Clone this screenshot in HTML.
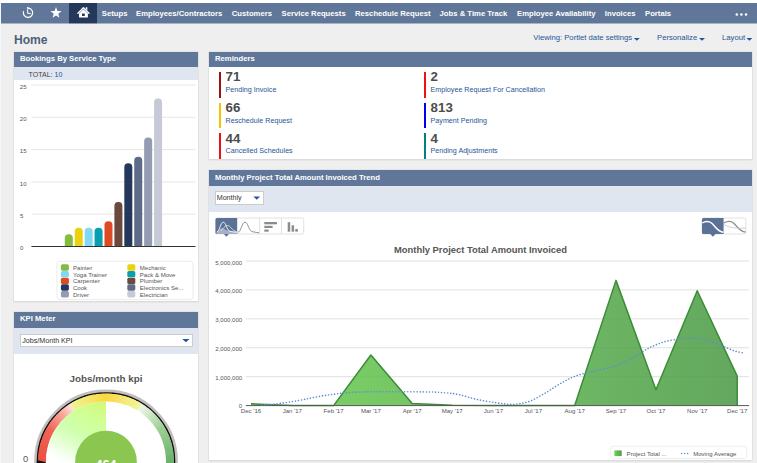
<!DOCTYPE html>
<html lang="en"><head><meta charset="utf-8"><title>Home</title>
<style>
html,body{margin:0;padding:0}
body{width:757px;height:463px;overflow:hidden;position:relative;background:#efefef;font-family:"Liberation Sans",sans-serif;color:#333}
.abs,.nav a,.tl,.portlet,.ph,.sub,.rem,.sel{position:absolute}
#topstrip{left:0;top:0;width:757px;height:3px;background:#fff}
#leftstrip{left:0;top:3px;width:1px;height:460px;background:#f4f7fc}
.nav{position:absolute;left:1px;top:3px;width:756px;height:20px;background:#607799;border-bottom:1px solid #a8b3c4}
.nav a{top:0;height:20.5px;line-height:21.4px;font-size:7.7px;font-weight:bold;color:#fff;white-space:nowrap;text-decoration:none}
.nav .home{left:68px;width:28px;height:20px;background:#24385b;border-bottom:1px solid #8a94a5}
h1{position:absolute;left:14px;top:32.6px;margin:0;font-size:12.1px;line-height:14px;font-weight:bold;color:#4d5f79}
.tl{top:32.7px;font-size:7.7px;line-height:10px;color:#255599;white-space:nowrap}
.portlet{background:#fff;box-shadow:0 0 0 .6px #dcdcdc, 0 1px 1.5px rgba(0,0,0,.12)}
.ph{left:0;top:0;right:0;height:15px;background:#607799;color:#fff;font-weight:bold;font-size:7.7px;line-height:13.4px;padding-left:6px;white-space:nowrap}
.sub{left:0;right:0;background:#e0e6ef}
.sel{background:#fff;border:.6px solid #ccc;box-sizing:border-box;font-size:7.15px;color:#333;white-space:nowrap}
.sel span{position:absolute;left:1.2px;top:0}
.rem{border-left:2px solid #000;height:25.5px;padding-left:4.6px;white-space:nowrap}
.rem b{display:block;font-size:13.3px;line-height:13px;color:#4d4d4d;margin-top:-1.6px}
.rem span{display:block;font-size:7.15px;line-height:9px;color:#255599;margin-top:2.9px}
svg{position:absolute;left:0;top:0;overflow:visible}
svg text{font-family:"Liberation Sans",sans-serif}
</style></head>
<body>
<div class="abs" id="topstrip"></div><div class="abs" id="leftstrip"></div>
<div class="nav"><a class="home" href="#"></a><a style="left:100.8px" href="#">Setups</a><a style="left:135.0px" href="#">Employees/Contractors</a><a style="left:230.8px" href="#">Customers</a><a style="left:280.6px" href="#">Service Requests</a><a style="left:354.0px" href="#">Reschedule Request</a><a style="left:438.6px" href="#">Jobs & Time Track</a><a style="left:516.0px" href="#">Employee Availability</a><a style="left:603.8px" href="#">Invoices</a><a style="left:644.0px" href="#">Portals</a></div>
<svg width="757" height="463" viewBox="0 0 757 463">
<g fill="none" stroke="#fff" stroke-width="1.1" stroke-linecap="round" stroke-linejoin="round">
<path d="M27.6 8.1 A4.65 4.65 0 1 1 23.5 11.6" stroke-width="1.2"/>
<path d="M27.4 7.4 L28.8 8.3 L27.6 9.5" stroke-width="1"/>
<path d="M27.7 10.2 V13.4 H30.4" stroke-width="1"/>
</g>
<polygon fill="#fff" points="56.00,7.10 57.41,11.06 61.61,11.18 58.28,13.74 59.47,17.77 56.00,15.40 52.53,17.77 53.72,13.74 50.39,11.18 54.59,11.06"/>
<g>
<path d="M77.9 13.3 L83.4 7.8 L89 13.3" fill="none" stroke="#fff" stroke-width="1.3" stroke-linecap="round" stroke-linejoin="round"/>
<path d="M85.7 7.2 h1.6 v3.2 l-1.6 -1.6z" fill="#fff"/>
<path d="M79 13.6 L83.4 9.3 L87.9 13.6 V17 a.5 .5 0 0 1 -.5 .5 H79.5 a.5 .5 0 0 1 -.5 -.5z M82 13.5 v2.5 h2.8 v-2.5z" fill="#fff" fill-rule="evenodd"/>
</g>
<g fill="#255599">
<path d="M633.8 38 h6 l-3 2.7z"/><path d="M699 38 h6 l-3 2.7z"/><path d="M746.4 38 h6 l-3 2.7z"/>

</g>
<g fill="#fff"><circle cx="736.8" cy="14.6" r="1.25"/><circle cx="741.4" cy="14.6" r="1.25"/><circle cx="746" cy="14.6" r="1.25"/></g>
</svg>
<h1>Home</h1>
<div class="tl" style="left:533.2px">Viewing: Portlet date settings</div>
<div class="tl" style="left:657px">Personalize</div>
<div class="tl" style="left:722px">Layout</div>

<div class="portlet" style="left:14px;top:52px;width:184px;height:249px">
 <div class="ph">Bookings By Service Type</div>
 <div class="sub" style="top:15px;height:13px"><span class="abs" style="left:14.5px;top:2.9px;font-size:7.05px;line-height:9px;color:#444">TOTAL: <span style="color:#255599">10</span></span></div>
</div>
<svg width="757" height="463" viewBox="0 0 757 463"><text x="23.4" y="250.20" text-anchor="end" font-size="6.05" fill="#555">0</text><line x1="31.4" x2="195.5" y1="214.20" y2="214.20" stroke="#e6e6e6" stroke-width="1"/><text x="23.4" y="217.90" text-anchor="end" font-size="6.05" fill="#555">5</text><line x1="31.4" x2="195.5" y1="181.90" y2="181.90" stroke="#e6e6e6" stroke-width="1"/><text x="26.5" y="185.60" text-anchor="end" font-size="6.05" fill="#555">10</text><line x1="31.4" x2="195.5" y1="149.60" y2="149.60" stroke="#e6e6e6" stroke-width="1"/><text x="26.5" y="153.30" text-anchor="end" font-size="6.05" fill="#555">15</text><line x1="31.4" x2="195.5" y1="117.30" y2="117.30" stroke="#e6e6e6" stroke-width="1"/><text x="26.5" y="121.00" text-anchor="end" font-size="6.05" fill="#555">20</text><line x1="31.4" x2="195.5" y1="85.00" y2="85.00" stroke="#e6e6e6" stroke-width="1"/><text x="26.5" y="88.70" text-anchor="end" font-size="6.05" fill="#555">25</text><path d="M64.80 245.5 V238.08 a3.8 3.8 0 0 1 3.8 -3.8 h0.40 a3.8 3.8 0 0 1 3.8 3.8 V245.5 a1 1 0 0 1 -1 1 h-6 a1 1 0 0 1 -1 -1z" fill="#84bc41"/><path d="M74.72 245.5 V231.62 a3.8 3.8 0 0 1 3.8 -3.8 h0.40 a3.8 3.8 0 0 1 3.8 3.8 V245.5 a1 1 0 0 1 -1 1 h-6 a1 1 0 0 1 -1 -1z" fill="#edd010"/><path d="M84.64 245.5 V231.62 a3.8 3.8 0 0 1 3.8 -3.8 h0.40 a3.8 3.8 0 0 1 3.8 3.8 V245.5 a1 1 0 0 1 -1 1 h-6 a1 1 0 0 1 -1 -1z" fill="#80d8f5"/><path d="M94.56 245.5 V231.62 a3.8 3.8 0 0 1 3.8 -3.8 h0.40 a3.8 3.8 0 0 1 3.8 3.8 V245.5 a1 1 0 0 1 -1 1 h-6 a1 1 0 0 1 -1 -1z" fill="#0a9fb0"/><path d="M104.48 245.5 V225.16 a3.8 3.8 0 0 1 3.8 -3.8 h0.40 a3.8 3.8 0 0 1 3.8 3.8 V245.5 a1 1 0 0 1 -1 1 h-6 a1 1 0 0 1 -1 -1z" fill="#dc4b23"/><path d="M114.40 245.5 V205.78 a3.8 3.8 0 0 1 3.8 -3.8 h0.40 a3.8 3.8 0 0 1 3.8 3.8 V245.5 a1 1 0 0 1 -1 1 h-6 a1 1 0 0 1 -1 -1z" fill="#6b493c"/><path d="M124.32 245.5 V167.02 a3.8 3.8 0 0 1 3.8 -3.8 h0.40 a3.8 3.8 0 0 1 3.8 3.8 V245.5 a1 1 0 0 1 -1 1 h-6 a1 1 0 0 1 -1 -1z" fill="#24385b"/><path d="M134.24 245.5 V160.56 a3.8 3.8 0 0 1 3.8 -3.8 h0.40 a3.8 3.8 0 0 1 3.8 3.8 V245.5 a1 1 0 0 1 -1 1 h-6 a1 1 0 0 1 -1 -1z" fill="#5c6b88"/><path d="M144.16 245.5 V141.18 a3.8 3.8 0 0 1 3.8 -3.8 h0.40 a3.8 3.8 0 0 1 3.8 3.8 V245.5 a1 1 0 0 1 -1 1 h-6 a1 1 0 0 1 -1 -1z" fill="#939cb3"/><path d="M154.08 245.5 V102.42 a3.8 3.8 0 0 1 3.8 -3.8 h0.40 a3.8 3.8 0 0 1 3.8 3.8 V245.5 a1 1 0 0 1 -1 1 h-6 a1 1 0 0 1 -1 -1z" fill="#c6cad6"/><line x1="31.4" x2="195.5" y1="246.5" y2="246.5" stroke="#333" stroke-width="1"/><rect x="57" y="261.3" width="136" height="38.3" rx="3" fill="#fff" stroke="#e3e3e3" stroke-width=".7"/><rect x="60.9" y="264.30" width="8" height="6.4" rx="1.6" fill="#84bc41"/><text x="73" y="270.10" font-size="6.05" fill="#555">Painter</text><rect x="127.3" y="264.30" width="8" height="6.4" rx="1.6" fill="#edd010"/><text x="139.8" y="270.10" font-size="6.05" fill="#555">Mechanic</text><rect x="60.9" y="270.97" width="8" height="6.4" rx="1.6" fill="#80d8f5"/><text x="73" y="276.77" font-size="6.05" fill="#555">Yoga Trainer</text><rect x="127.3" y="270.97" width="8" height="6.4" rx="1.6" fill="#0a9fb0"/><text x="139.8" y="276.77" font-size="6.05" fill="#555">Pack & Move</text><rect x="60.9" y="277.64" width="8" height="6.4" rx="1.6" fill="#dc4b23"/><text x="73" y="283.44" font-size="6.05" fill="#555">Carpenter</text><rect x="127.3" y="277.64" width="8" height="6.4" rx="1.6" fill="#6b493c"/><text x="139.8" y="283.44" font-size="6.05" fill="#555">Plumber</text><rect x="60.9" y="284.31" width="8" height="6.4" rx="1.6" fill="#24385b"/><text x="73" y="290.11" font-size="6.05" fill="#555">Cook</text><rect x="127.3" y="284.31" width="8" height="6.4" rx="1.6" fill="#5c6b88"/><text x="139.8" y="290.11" font-size="6.05" fill="#555">Electronics Se...</text><rect x="60.9" y="290.98" width="8" height="6.4" rx="1.6" fill="#939cb3"/><text x="73" y="296.78" font-size="6.05" fill="#555">Driver</text><rect x="127.3" y="290.98" width="8" height="6.4" rx="1.6" fill="#c6cad6"/><text x="139.8" y="296.78" font-size="6.05" fill="#555">Electrician</text></svg>

<div class="portlet" style="left:14px;top:312px;width:184px;height:160px">
 <div class="ph" style="height:16px;line-height:14.4px">KPI Meter</div>
 <div class="sub" style="top:16px;height:26px"><div class="sel" style="left:6px;top:6px;width:172.5px;height:13.4px;line-height:12.4px"><span>Jobs/Month KPI</span></div></div>
</div>
<svg width="757" height="463" viewBox="0 0 757 463"><defs><linearGradient id="sg" gradientUnits="userSpaceOnUse" x1="62" y1="472" x2="100" y2="402"><stop offset="0.12" stop-color="#fff"/><stop offset="0.5" stop-color="#d0ffb2"/><stop offset="0.8" stop-color="#d0ff92"/><stop offset="1" stop-color="#d4f87c"/></linearGradient><clipPath id="kc"><rect x="14" y="354" width="184" height="109"/></clipPath></defs><g clip-path="url(#kc)"><circle cx="106" cy="461.5" r="70.3" fill="none" stroke="#c2bebe" stroke-width="3.2"/><circle cx="106" cy="461.5" r="68.4" fill="#fff" stroke="#111" stroke-width="1.8"/><path d="M38.37 468.61 A68 68 0 0 1 38.11 465.33 L46.10 464.88 A60 60 0 0 0 46.33 467.77z" fill="#ea4b3b"/><path d="M38.15 466.09 A68 68 0 0 1 38.01 462.80 L46.01 462.64 A60 60 0 0 0 46.14 465.55z" fill="#eb4c3d"/><path d="M38.03 463.56 A68 68 0 0 1 38.01 460.27 L46.01 460.41 A60 60 0 0 0 46.03 463.31z" fill="#eb4e3e"/><path d="M38.00 461.03 A68 68 0 0 1 38.10 457.74 L46.09 458.18 A60 60 0 0 0 46.00 461.08z" fill="#eb5040"/><path d="M38.07 458.49 A68 68 0 0 1 38.29 455.21 L46.26 455.95 A60 60 0 0 0 46.06 458.85z" fill="#ec5142"/><path d="M38.23 455.97 A68 68 0 0 1 38.57 452.69 L46.51 453.73 A60 60 0 0 0 46.20 456.62z" fill="#ec5343"/><path d="M38.48 453.45 A68 68 0 0 1 38.95 450.19 L46.84 451.52 A60 60 0 0 0 46.42 454.40z" fill="#ec5445"/><path d="M38.82 450.94 A68 68 0 0 1 39.41 447.70 L47.25 449.33 A60 60 0 0 0 46.73 452.18z" fill="#ed5647"/><path d="M39.26 448.45 A68 68 0 0 1 39.97 445.23 L47.74 447.15 A60 60 0 0 0 47.12 449.98z" fill="#ed5748"/><path d="M39.80 445.97 A68 68 0 0 1 40.63 442.79 L48.32 444.99 A60 60 0 0 0 47.59 447.80z" fill="#ed594a"/><path d="M40.42 443.52 A68 68 0 0 1 41.37 440.37 L48.97 442.85 A60 60 0 0 0 48.14 445.63z" fill="#ee5b4c"/><path d="M41.14 441.09 A68 68 0 0 1 42.20 437.98 L49.70 440.74 A60 60 0 0 0 48.77 443.49z" fill="#ee5c4e"/><path d="M41.94 438.69 A68 68 0 0 1 43.12 435.62 L50.52 438.66 A60 60 0 0 0 49.48 441.37z" fill="#ef5e4f"/><path d="M42.83 436.32 A68 68 0 0 1 44.13 433.29 L51.41 436.61 A60 60 0 0 0 50.26 439.28z" fill="#ef5f51"/><path d="M43.81 433.99 A68 68 0 0 1 45.22 431.01 L52.37 434.60 A60 60 0 0 0 51.13 437.22z" fill="#ef6153"/><path d="M44.88 431.69 A68 68 0 0 1 46.40 428.77 L53.41 432.62 A60 60 0 0 0 52.07 435.20z" fill="#f06254"/><path d="M46.03 429.44 A68 68 0 0 1 47.66 426.57 L54.52 430.68 A60 60 0 0 0 53.09 433.21z" fill="#f06456"/><path d="M47.27 427.23 A68 68 0 0 1 49.00 424.42 L55.70 428.79 A60 60 0 0 0 54.18 431.26z" fill="#f16c5e"/><path d="M48.59 425.06 A68 68 0 0 1 50.42 422.33 L56.96 426.94 A60 60 0 0 0 55.34 429.35z" fill="#f27466"/><path d="M49.98 422.95 A68 68 0 0 1 51.91 420.29 L58.28 425.14 A60 60 0 0 0 56.57 427.49z" fill="#f37b6f"/><path d="M51.46 420.89 A68 68 0 0 1 53.48 418.30 L59.66 423.38 A60 60 0 0 0 57.87 425.67z" fill="#f48377"/><path d="M53.01 418.89 A68 68 0 0 1 55.13 416.38 L61.11 421.69 A60 60 0 0 0 59.24 423.90z" fill="#f68b7f"/><path d="M54.63 416.95 A68 68 0 0 1 56.84 414.51 L62.63 420.04 A60 60 0 0 0 60.67 422.19z" fill="#f79387"/><path d="M56.32 415.07 A68 68 0 0 1 58.63 412.72 L64.20 418.46 A60 60 0 0 0 62.17 420.53z" fill="#f89a90"/><path d="M58.08 413.25 A68 68 0 0 1 60.48 410.99 L65.83 416.93 A60 60 0 0 0 63.72 418.93z" fill="#f9a298"/><path d="M59.91 411.50 A68 68 0 0 1 62.39 409.33 L67.52 415.47 A60 60 0 0 0 65.34 417.38z" fill="#faaaa0"/><path d="M61.81 409.82 A68 68 0 0 1 64.36 407.74 L69.26 414.07 A60 60 0 0 0 67.01 415.90z" fill="#fbb6ae"/><path d="M63.76 408.21 A68 68 0 0 1 66.39 406.23 L71.05 412.73 A60 60 0 0 0 68.73 414.48z" fill="#fcc3bc"/><path d="M65.77 406.67 A68 68 0 0 1 68.47 404.79 L72.89 411.46 A60 60 0 0 0 70.51 413.12z" fill="#fdcfc9"/><path d="M67.84 405.21 A68 68 0 0 1 69.97 403.83 L74.20 410.62 A60 60 0 0 0 72.33 411.84z" fill="#fedcd7"/><path d="M69.97 403.83 A68 68 0 0 1 72.80 402.16 L76.70 409.14 A60 60 0 0 0 74.20 410.62z" fill="#eef593"/><path d="M72.14 402.53 A68 68 0 0 1 75.03 400.96 L78.67 408.08 A60 60 0 0 0 76.12 409.47z" fill="#eff38e"/><path d="M74.36 401.31 A68 68 0 0 1 77.30 399.85 L80.68 407.10 A60 60 0 0 0 78.08 408.39z" fill="#f0f188"/><path d="M76.62 400.18 A68 68 0 0 1 79.62 398.83 L82.72 406.20 A60 60 0 0 0 80.07 407.39z" fill="#f1ef82"/><path d="M78.92 399.12 A68 68 0 0 1 81.97 397.89 L84.80 405.37 A60 60 0 0 0 82.11 406.46z" fill="#f2ec7d"/><path d="M81.26 398.16 A68 68 0 0 1 84.36 397.04 L86.90 404.62 A60 60 0 0 0 84.17 405.61z" fill="#f3ea77"/><path d="M83.64 397.28 A68 68 0 0 1 86.77 396.28 L89.03 403.95 A60 60 0 0 0 86.27 404.84z" fill="#f4e872"/><path d="M86.04 396.49 A68 68 0 0 1 89.21 395.60 L91.19 403.36 A60 60 0 0 0 88.39 404.14z" fill="#f5e66c"/><path d="M88.48 395.80 A68 68 0 0 1 91.68 395.03 L93.36 402.85 A60 60 0 0 0 90.54 403.53z" fill="#f6e466"/><path d="M90.93 395.19 A68 68 0 0 1 94.16 394.54 L95.55 402.42 A60 60 0 0 0 92.71 402.99z" fill="#f7e261"/><path d="M93.41 394.67 A68 68 0 0 1 96.66 394.14 L97.76 402.07 A60 60 0 0 0 94.89 402.54z" fill="#f8e05b"/><path d="M95.91 394.25 A68 68 0 0 1 99.18 393.84 L99.98 401.80 A60 60 0 0 0 97.10 402.16z" fill="#f9dd56"/><path d="M98.42 393.92 A68 68 0 0 1 101.70 393.64 L102.20 401.62 A60 60 0 0 0 99.31 401.87z" fill="#fadb50"/><path d="M100.94 393.69 A68 68 0 0 1 104.23 393.52 L104.44 401.52 A60 60 0 0 0 101.54 401.67z" fill="#fbd94a"/><path d="M103.47 393.55 A68 68 0 0 1 106.76 393.50 L106.67 401.50 A60 60 0 0 0 103.77 401.54z" fill="#fcd745"/><path d="M106.00 393.50 A68 68 0 0 1 109.29 393.58 L108.90 401.57 A60 60 0 0 0 106.00 401.50z" fill="#fcd745"/><path d="M108.53 393.55 A68 68 0 0 1 111.82 393.75 L111.13 401.72 A60 60 0 0 0 108.23 401.54z" fill="#fbd94b"/><path d="M111.06 393.69 A68 68 0 0 1 114.33 394.01 L113.35 401.95 A60 60 0 0 0 110.46 401.67z" fill="#fadc52"/><path d="M113.58 393.92 A68 68 0 0 1 116.84 394.37 L115.57 402.27 A60 60 0 0 0 112.69 401.87z" fill="#f9de58"/><path d="M116.09 394.25 A68 68 0 0 1 119.33 394.82 L117.76 402.66 A60 60 0 0 0 114.90 402.16z" fill="#f8e05e"/><path d="M118.59 394.67 A68 68 0 0 1 121.81 395.36 L119.95 403.14 A60 60 0 0 0 117.11 402.54z" fill="#f8e264"/><path d="M121.07 395.19 A68 68 0 0 1 124.26 396.00 L122.11 403.70 A60 60 0 0 0 119.29 402.99z" fill="#f7e56b"/><path d="M123.52 395.80 A68 68 0 0 1 126.68 396.72 L124.25 404.34 A60 60 0 0 0 121.46 403.53z" fill="#f6e771"/><path d="M125.96 396.49 A68 68 0 0 1 129.08 397.54 L126.36 405.06 A60 60 0 0 0 123.61 404.14z" fill="#f5e977"/><path d="M128.36 397.28 A68 68 0 0 1 131.44 398.44 L128.45 405.86 A60 60 0 0 0 125.73 404.84z" fill="#f4ec7e"/><path d="M130.74 398.16 A68 68 0 0 1 133.77 399.43 L130.51 406.73 A60 60 0 0 0 127.83 405.61z" fill="#f4ee84"/><path d="M133.08 399.12 A68 68 0 0 1 136.06 400.51 L132.53 407.68 A60 60 0 0 0 129.89 406.46z" fill="#f3f08a"/><path d="M135.38 400.18 A68 68 0 0 1 138.31 401.67 L134.51 408.71 A60 60 0 0 0 131.93 407.39z" fill="#f2f290"/><path d="M137.64 401.31 A68 68 0 0 1 140.52 402.91 L136.46 409.81 A60 60 0 0 0 133.92 408.39z" fill="#f1f597"/><path d="M139.86 402.53 A68 68 0 0 1 142.03 403.83 L137.80 410.62 A60 60 0 0 0 135.88 409.47z" fill="#f0f79d"/><path d="M142.03 403.83 A68 68 0 0 1 144.78 405.64 L140.22 412.22 A60 60 0 0 0 137.80 410.62z" fill="#edf6e8"/><path d="M144.16 405.21 A68 68 0 0 1 146.83 407.13 L142.03 413.52 A60 60 0 0 0 139.67 411.84z" fill="#e6f3e1"/><path d="M146.23 406.67 A68 68 0 0 1 148.83 408.68 L143.79 414.90 A60 60 0 0 0 141.49 413.12z" fill="#dff0da"/><path d="M148.24 408.21 A68 68 0 0 1 150.77 410.31 L145.50 416.34 A60 60 0 0 0 143.27 414.48z" fill="#d9ecd3"/><path d="M150.19 409.82 A68 68 0 0 1 152.64 412.02 L147.15 417.84 A60 60 0 0 0 144.99 415.90z" fill="#d2e9cc"/><path d="M152.09 411.50 A68 68 0 0 1 154.45 413.79 L148.75 419.40 A60 60 0 0 0 146.66 417.38z" fill="#cbe6c5"/><path d="M153.92 413.25 A68 68 0 0 1 156.19 415.62 L150.29 421.02 A60 60 0 0 0 148.28 418.93z" fill="#c5e2bd"/><path d="M155.68 415.07 A68 68 0 0 1 157.87 417.52 L151.76 422.70 A60 60 0 0 0 149.83 420.53z" fill="#bedfb6"/><path d="M157.37 416.95 A68 68 0 0 1 159.47 419.49 L153.18 424.43 A60 60 0 0 0 151.33 422.19z" fill="#b7dcaf"/><path d="M158.99 418.89 A68 68 0 0 1 160.99 421.51 L154.52 426.21 A60 60 0 0 0 152.76 423.90z" fill="#b1d8a8"/><path d="M160.54 420.89 A68 68 0 0 1 162.45 423.58 L155.80 428.04 A60 60 0 0 0 154.13 425.67z" fill="#aad5a1"/><path d="M162.02 422.95 A68 68 0 0 1 163.82 425.71 L157.02 429.92 A60 60 0 0 0 155.43 427.49z" fill="#a3d29a"/><path d="M163.41 425.06 A68 68 0 0 1 165.11 427.88 L158.16 431.84 A60 60 0 0 0 156.66 429.35z" fill="#9ecf95"/><path d="M164.73 427.23 A68 68 0 0 1 166.32 430.11 L159.22 433.80 A60 60 0 0 0 157.82 431.26z" fill="#9bcd92"/><path d="M165.97 429.44 A68 68 0 0 1 167.45 432.38 L160.22 435.80 A60 60 0 0 0 158.91 433.21z" fill="#97cb8f"/><path d="M167.12 431.69 A68 68 0 0 1 168.49 434.68 L161.14 437.84 A60 60 0 0 0 159.93 435.20z" fill="#94c98c"/><path d="M168.19 433.99 A68 68 0 0 1 169.44 437.03 L161.98 439.91 A60 60 0 0 0 160.87 437.22z" fill="#90c78a"/><path d="M169.17 436.32 A68 68 0 0 1 170.31 439.41 L162.74 442.01 A60 60 0 0 0 161.74 439.28z" fill="#8cc587"/><path d="M170.06 438.69 A68 68 0 0 1 171.09 441.82 L163.43 444.13 A60 60 0 0 0 162.52 441.37z" fill="#89c384"/><path d="M170.86 441.09 A68 68 0 0 1 171.78 444.25 L164.04 446.28 A60 60 0 0 0 163.23 443.49z" fill="#85c181"/><path d="M171.58 443.52 A68 68 0 0 1 172.37 446.71 L164.56 448.45 A60 60 0 0 0 163.86 445.63z" fill="#82bf7e"/><path d="M172.20 445.97 A68 68 0 0 1 172.88 449.19 L165.01 450.64 A60 60 0 0 0 164.41 447.80z" fill="#7ebd7c"/><path d="M172.74 448.45 A68 68 0 0 1 173.29 451.69 L165.37 452.85 A60 60 0 0 0 164.88 449.98z" fill="#7bbb79"/><path d="M173.18 450.94 A68 68 0 0 1 173.61 454.20 L165.65 455.06 A60 60 0 0 0 165.27 452.18z" fill="#77b976"/><path d="M173.52 453.45 A68 68 0 0 1 173.83 456.72 L165.85 457.29 A60 60 0 0 0 165.58 454.40z" fill="#74b773"/><path d="M173.77 455.97 A68 68 0 0 1 173.96 459.25 L165.97 459.52 A60 60 0 0 0 165.80 456.62z" fill="#70b570"/><path d="M173.93 458.49 A68 68 0 0 1 174.00 461.78 L166.00 461.75 A60 60 0 0 0 165.94 458.85z" fill="#6cb36e"/><path d="M174.00 461.03 A68 68 0 0 1 173.94 464.32 L165.95 463.98 A60 60 0 0 0 166.00 461.08z" fill="#69b16b"/><path d="M173.97 463.56 A68 68 0 0 1 173.79 466.84 L165.81 466.21 A60 60 0 0 0 165.97 463.31z" fill="#65af68"/><path d="M173.85 466.09 A68 68 0 0 1 173.63 468.61 L165.67 467.77 A60 60 0 0 0 165.86 465.55z" fill="#62ad65"/><path d="M106 464.5 L46.00 464.5 L46.00 461.50 A60 60 0 0 1 106.00 401.50z" fill="url(#sg)"/><circle cx="106" cy="461.5" r="30.8" fill="#8ac650"/><path d="M36.5 463 L38 460.3 L45.6 462.2 L45.4 463z" fill="#111"/><text x="106" y="468.6" text-anchor="middle" font-size="12.6" font-weight="bold" fill="#fff">464</text></g><text x="106" y="381.8" text-anchor="middle" font-size="9.9" font-weight="bold" fill="#555">Jobs/month kpi</text><text x="23" y="462" font-size="9.4" fill="#555">0</text></svg>

<div class="portlet" style="left:209px;top:52px;width:543.3px;height:107.2px">
 <div class="ph">Reminders</div>
 <div class="rem" style="left:10px;top:20.0px;border-left-color:#a01010"><b>71</b><span>Pending Invoice</span></div><div class="rem" style="left:10px;top:50.6px;border-left-color:#f8c200"><b>66</b><span>Reschedule Request</span></div><div class="rem" style="left:10px;top:81.1px;border-left-color:#f01010"><b>44</b><span>Cancelled Schedules</span></div><div class="rem" style="left:215px;top:20.0px;border-left-color:#f01010"><b>2</b><span>Employee Request For Cancellation</span></div><div class="rem" style="left:215px;top:50.6px;border-left-color:#0000ee"><b>813</b><span>Payment Pending</span></div><div class="rem" style="left:215px;top:81.1px;border-left-color:#008080"><b>4</b><span>Pending Adjustments</span></div>
</div>

<div class="portlet" style="left:209px;top:170px;width:543.3px;height:290px">
 <div class="ph" style="height:16px;line-height:15.6px">Monthly Project Total Amount Invoiced Trend</div>
 <div class="sub" style="top:16px;height:26px"><div class="sel" style="left:5.5px;top:5px;width:49px;height:13.6px;line-height:12.6px"><span>Monthly</span></div></div>
</div>
<svg width="757" height="463" viewBox="0 0 757 463"><defs><linearGradient id="ag" gradientUnits="userSpaceOnUse" x1="251" y1="0" x2="738" y2="0"><stop offset="0" stop-color="#67cd48"/><stop offset="0.5" stop-color="#59b34c"/><stop offset="1" stop-color="#489842"/></linearGradient></defs><text x="242.2" y="407.90" text-anchor="end" font-size="6.05" fill="#555">0</text><line x1="245.8" x2="749" y1="376.68" y2="376.68" stroke="#e0e0e0" stroke-width="1"/><text x="242.2" y="380.18" text-anchor="end" font-size="6.05" fill="#555">1,000,000</text><line x1="245.8" x2="749" y1="347.76" y2="347.76" stroke="#e0e0e0" stroke-width="1"/><text x="242.2" y="351.26" text-anchor="end" font-size="6.05" fill="#555">2,000,000</text><line x1="245.8" x2="749" y1="318.84" y2="318.84" stroke="#e0e0e0" stroke-width="1"/><text x="242.2" y="322.34" text-anchor="end" font-size="6.05" fill="#555">3,000,000</text><line x1="245.8" x2="749" y1="289.92" y2="289.92" stroke="#e0e0e0" stroke-width="1"/><text x="242.2" y="293.42" text-anchor="end" font-size="6.05" fill="#555">4,000,000</text><line x1="245.8" x2="749" y1="261.00" y2="261.00" stroke="#e0e0e0" stroke-width="1"/><text x="242.2" y="264.50" text-anchor="end" font-size="6.05" fill="#555">5,000,000</text><polygon points="251.00,405.6 251.00,403.86 292.29,405.60 333.59,405.60 370.88,354.99 412.18,403.58 452.14,405.31 493.43,405.60 533.40,405.60 574.69,405.60 615.98,280.38 655.94,389.69 697.24,290.79 737.20,376.10 737.20,405.6" fill="url(#ag)" fill-opacity=".85"/><polyline points="251.00,403.86 292.29,405.60 333.59,405.60 370.88,354.99 412.18,403.58 452.14,405.31 493.43,405.60 533.40,405.60 574.69,405.60 615.98,280.38 655.94,389.69 697.24,290.79 737.20,376.10 737.20,405.6" fill="none" stroke="#3c8c37" stroke-width="1.5" stroke-linejoin="round"/><line x1="245.8" x2="749" y1="405.6" y2="405.6" stroke="#555" stroke-width="1"/><text x="251.00" y="412.7" text-anchor="middle" font-size="6.05" fill="#555">Dec '16</text><text x="292.29" y="412.7" text-anchor="middle" font-size="6.05" fill="#555">Jan '17</text><text x="333.59" y="412.7" text-anchor="middle" font-size="6.05" fill="#555">Feb '17</text><text x="370.88" y="412.7" text-anchor="middle" font-size="6.05" fill="#555">Mar '17</text><text x="412.18" y="412.7" text-anchor="middle" font-size="6.05" fill="#555">Apr '17</text><text x="452.14" y="412.7" text-anchor="middle" font-size="6.05" fill="#555">May '17</text><text x="493.43" y="412.7" text-anchor="middle" font-size="6.05" fill="#555">Jun '17</text><text x="533.40" y="412.7" text-anchor="middle" font-size="6.05" fill="#555">Jul '17</text><text x="574.69" y="412.7" text-anchor="middle" font-size="6.05" fill="#555">Aug '17</text><text x="615.98" y="412.7" text-anchor="middle" font-size="6.05" fill="#555">Sep '17</text><text x="655.94" y="412.7" text-anchor="middle" font-size="6.05" fill="#555">Oct '17</text><text x="697.24" y="412.7" text-anchor="middle" font-size="6.05" fill="#555">Nov '17</text><text x="737.20" y="412.7" text-anchor="middle" font-size="6.05" fill="#555">Dec '17</text><path d="M262 405 C264.17 404.83 269.00 404.73 275 404 C281.00 403.27 291.17 401.77 298 400.6 C304.83 399.43 310.03 398.07 316 397 C321.97 395.93 327.87 394.97 333.8 394.2 C339.73 393.43 345.40 392.80 351.6 392.4 C357.80 392.00 362.93 391.90 371 391.8 C379.07 391.70 390.17 391.77 400 391.8 C409.83 391.83 422.50 391.83 430 392 C437.50 392.17 440.23 392.38 445 392.8 C449.77 393.22 453.30 393.40 458.6 394.5 C463.90 395.60 470.47 398.02 476.8 399.4 C483.13 400.78 490.65 401.98 496.6 402.8 C502.55 403.62 507.22 404.48 512.5 404.3 C517.78 404.12 523.02 403.47 528.3 401.7 C533.58 399.93 538.92 396.68 544.2 393.7 C549.48 390.72 554.72 386.77 560 383.8 C565.28 380.83 569.95 378.08 575.9 375.9 C581.85 373.72 589.10 372.35 595.7 370.7 C602.30 369.05 609.55 367.98 615.5 366 C621.45 364.02 626.10 361.65 631.4 358.8 C636.70 355.95 642.03 351.67 647.3 348.9 C652.57 346.13 657.72 343.85 663 342.2 C668.28 340.55 674.37 339.67 679 339 C683.63 338.33 686.18 338.00 690.8 338.2 C695.42 338.40 701.40 338.87 706.7 340.2 C712.00 341.53 717.97 344.42 722.6 346.2 C727.23 347.98 731.07 349.78 734.5 350.9 C737.93 352.02 741.75 352.57 743.2 352.9" fill="none" stroke="#5b8fd1" stroke-width="1.6" stroke-dasharray="0.01 3.05" stroke-linecap="round"/><text x="480.5" y="253.2" text-anchor="middle" font-size="9.38" font-weight="bold" fill="#555">Monthly Project Total Amount Invoiced</text><rect x="610.8" y="446.2" width="135.9" height="12.3" rx="2.5" fill="#fff" stroke="#e6e6e6" stroke-width=".7"/><defs><linearGradient id="lg" x1="0" x2="1"><stop offset="0" stop-color="#6fd052"/><stop offset="1" stop-color="#529d4c"/></linearGradient></defs><rect x="614.4" y="450.4" width="7.3" height="5.7" fill="url(#lg)"/><text x="626.6" y="455.9" font-size="6.05" fill="#555">Project Total ...</text><g fill="#5b8fd1"><circle cx="681.6" cy="453.4" r=".75"/><circle cx="684.6" cy="453.4" r=".75"/><circle cx="687.6" cy="453.4" r=".75"/></g><text x="693.2" y="455.9" font-size="6.05" fill="#555">Moving Average</text><rect x="215.5" y="218" width="88.2" height="16" rx="1.5" fill="#fff" stroke="#d6d6d6" stroke-width=".7"/><path d="M217 218 H237.2 V234 H228.9 L226.4 236.8 L223.9 234 H217 a1.5 1.5 0 0 1 -1.5 -1.5 V219.5 a1.5 1.5 0 0 1 1.5 -1.5z" fill="#5b7195"/><line x1="259.6" x2="259.6" y1="218" y2="234" stroke="#d6d6d6" stroke-width=".7"/><line x1="281.5" x2="281.5" y1="218" y2="234" stroke="#d6d6d6" stroke-width=".7"/><path d="M216.5 234 V231.8 C219 231.5 220 228.5 222 228.3 C224.5 228 225 230.3 227.5 230.5 C230.5 230.7 232 231.8 237.2 232 V234z" fill="#a3b0c6"/><path d="M217 232 C219.5 231.5 220.5 222.2 223.3 222.2 C226 222.2 226.5 229.8 229.5 231 C231.5 231.8 234 232 237 232.2" fill="none" stroke="#fff" stroke-width=".9"/><path d="M220.5 230.5 C223 229.5 224.5 225.6 227.5 225.5 C230.5 225.5 231.5 230.5 236.5 231.6" fill="none" stroke="#e6eaf1" stroke-width=".8"/><path d="M238 232.3 C241 231.8 242 222.2 245 222.2 C248 222.2 248.5 230 251.5 231.3 C254 232.3 256 232.2 259 232.8" fill="none" stroke="#777" stroke-width=".8"/><g fill="#8c8c8c"><rect x="264.3" y="222" width="12.7" height="2.3"/><rect x="264.3" y="225.8" width="8.3" height="2.2"/><rect x="264.3" y="229.5" width="4.3" height="2.2"/></g><g fill="#8c8c8c"><rect x="287.7" y="222.2" width="2.5" height="9.5"/><rect x="291.6" y="225.3" width="2.5" height="6.4"/><rect x="295.3" y="229" width="2.5" height="2.7"/></g><rect x="702" y="218" width="43.8" height="16" rx="1.5" fill="#fff" stroke="#d6d6d6" stroke-width=".7"/><path d="M703.5 218 H723.6 V234 H715.5 L712.9 236.8 L710.3 234 H703.5 a1.5 1.5 0 0 1 -1.5 -1.5 V219.5 a1.5 1.5 0 0 1 1.5 -1.5z" fill="#5b7195"/><path d="M702.3 223 C705 221.2 708.5 220.8 711.5 223 C715 225.8 717 231.6 723.4 232.2" fill="none" stroke="#fff" stroke-width="1.5"/><path d="M724 223 C727 221.2 730.5 220.8 733.5 223 C737 225.8 739 231.6 745.6 232.2" fill="none" stroke="#8a8a8a" stroke-width="1.3"/><path d="M724 224.5 C730 228.5 738 228.3 745.6 228.2" fill="none" stroke="#c6c6c6" stroke-width=".8"/><g fill="#255599"><path d="M182.3 338.9 h7.2 l-3.6 3.3z"/><path d="M253.4 196.4 h6.6 l-3.3 3.3z"/></g></svg>
</body></html>
